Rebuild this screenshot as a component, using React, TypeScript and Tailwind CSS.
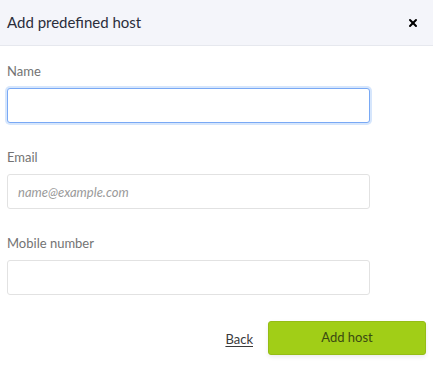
import { X } from "lucide-react";

const FIELDS = [
  { label: "Name", placeholder: "", focused: true },
  { label: "Email", placeholder: "name@example.com", focused: false },
  { label: "Mobile number", placeholder: "", focused: false },
];

export default function App() {
  return (
    <div className="w-[433px] h-[365px] bg-white font-['Lato',sans-serif] overflow-hidden">
      {/* Header */}
      <div className="h-[46px] bg-[#f4f5fa] border-b border-[#e6e8ee] flex items-center justify-between pl-[7px] pr-[14px]">
        <span className="text-[15px] text-[#2b2d3a]">Add predefined host</span>
        <X className="size-[12px] text-black" strokeWidth={4} />
      </div>

      {/* Form */}
      <div className="px-[7px] pt-[17px]">
        {FIELDS.map((field) => (
          <div key={field.label} className="mb-[26px]">
            <label className="block text-[13px] text-[#737373] mb-[8px] leading-[17px]">
              {field.label}
            </label>
            <input
              className={`w-[363px] h-[35px] rounded-[3px] bg-white px-[10px] text-[13px] italic placeholder:text-[#9a9a9a] outline-none ${
                field.focused
                  ? "border border-[#79a9f5] ring-[2px] ring-[#d6e6fc]"
                  : "border border-[#e2e2e2]"
              }`}
              placeholder={field.placeholder}
            />
          </div>
        ))}
      </div>

      {/* Footer */}
      <div className="flex items-center justify-end gap-[15px] pr-[7px] mt-[5px]">
        <a className="text-[13px] text-[#3a3a3a] underline underline-offset-2 pt-[3px] cursor-pointer">Back</a>
        <button className="w-[158px] h-[34px] rounded-[3px] bg-[#a1ce17] border border-[#95bd15] text-[13px] text-[#3b4a12] shadow-[0_2px_4px_rgba(0,0,0,0.08)]">
          Add host
        </button>
      </div>
    </div>
  );
}
